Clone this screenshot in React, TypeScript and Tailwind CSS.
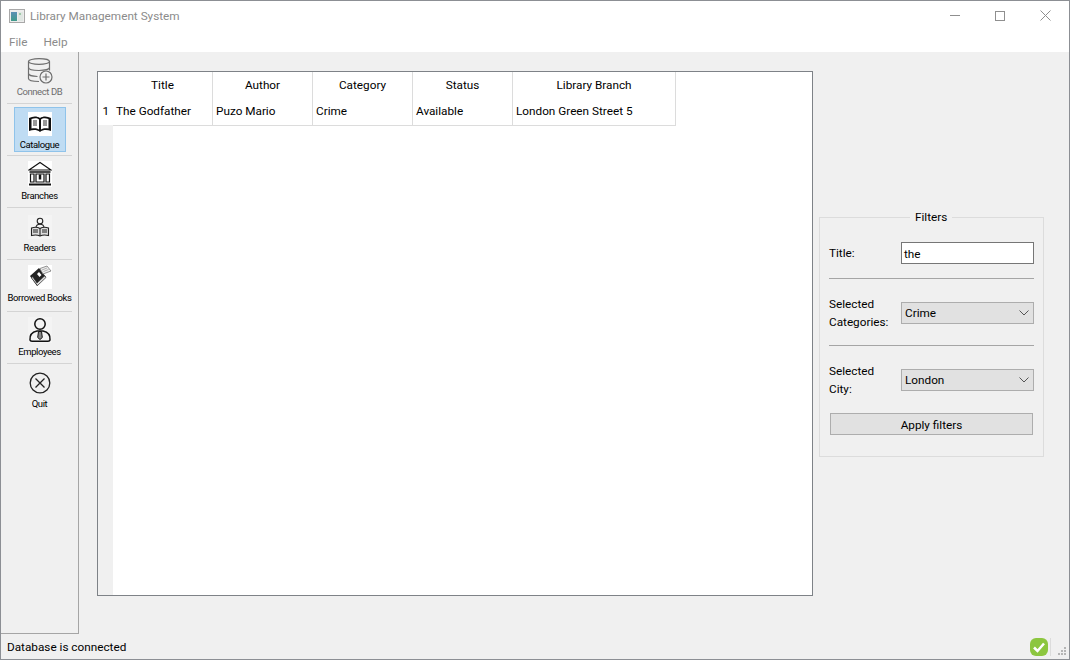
import React from "react";

const font = { fontFamily: 'Roboto, "Noto Sans", sans-serif' };

function DbIcon() {
  return (
    <svg width="26" height="26" viewBox="0 0 26 26" fill="none" stroke="#6e6e6e" strokeWidth="1.2">
      <ellipse cx="12" cy="3.5" rx="10.5" ry="2.8" />
      <path d="M1.5 3.5v17c0 1.8 4.5 3 10.500 3" />
      <path d="M22.5 3.5v9" />
      <path d="M1.500 9.500c0 1.800 4.700 3 10.500 3s10.500-1.200 10.500-3" />
      <path d="M1.500 15.500c0 1.800 4.500 3 9 3" />
      <circle cx="19" cy="19" r="6" fill="#f0f0f0" />
      <path d="M19 15.500v7M15.500 19h7" />
    </svg>
  );
}

function BookIcon() {
  return (
    <svg width="24" height="24" viewBox="0 0 24 24" className="bg-white">
      <path d="M1 19V6c4-2 8-2 11 0 3-2 7-2 11 0v13c-4-1.500-8-1.500-11 1-3-2.500-7-2.500-11-1z" fill="#111" />
      <path d="M3.500 16.500V7c3-1 6-1 7.500 .5v10c-2-1.500-5-1.500-7.500-1zM20.500 16.500V7c-3-1-6-1-7.500 .5v10c2-1.500 5-1.500 7.500-1z" fill="#fff" />
      <path d="M5 9h4M5 11h4M5 13h4M15 9h4M15 11h4M15 13h4" stroke="#333" strokeWidth="1" />
    </svg>
  );
}

function BankIcon() {
  return (
    <svg width="24" height="26" viewBox="0 0 24 26" fill="none" stroke="#111" strokeWidth="1.200" className="bg-white">
      <path d="M1 9 12 1.500 23 9z" />
      <path d="M1.500 11h21" strokeWidth="1.500" />
      <path d="M2.500 13h3.500v8H2.500zM18 13h3.500v8H18z" />
      <path d="M8 13h8v8H8z" />
      <path d="M12 13.500v5" strokeWidth="2.500" />
      <path d="M1 23.500h22" strokeWidth="2" />
    </svg>
  );
}

function ReaderIcon() {
  return (
    <svg width="24" height="24" viewBox="0 0 24 24" fill="none" stroke="#222" strokeWidth="1.100" className="bg-[#f4f4f4]">
      <circle cx="12" cy="6" r="2.800" />
      <path d="M8 13c0-2.500 2-3.800 4-3.800s4 1.300 4 3.800" />
      <path d="M3.500 13c3-1 6-1 8.500 .5 2.500-1.500 5.500-1.500 8.500-.5v7.500c-3-.800-6-.800-8.500 .5-2.500-1.300-5.500-1.300-8.500-.5z" fill="#ddd" />
      <path d="M5 15h5M5 17h5M14 15h5M14 17h5M12 13.500V21" />
    </svg>
  );
}

function BorrowedIcon() {
  return (
    <svg width="24" height="24" viewBox="0 0 24 24" className="bg-white">
      <path d="M2 11 11 3l7 9-9 9z" fill="#222" />
      <path d="M3.500 13 9.500 20.500 18 12.500 16.500 11 9 18 4.500 11.500z" fill="#ddd" stroke="#222" strokeWidth=".6" />
      <path d="M9 9l2-2 2.500 3-2 2z" fill="#fff" />
      <path d="M12 3.500 19 1l4 5-8 3z" fill="#eee" stroke="#777" strokeWidth=".8" />
      <path d="M14 5l5-2M15.500 6.500l5-2" stroke="#999" strokeWidth=".7" />
    </svg>
  );
}

function EmployeeIcon() {
  return (
    <svg width="24" height="26" viewBox="0 0 24 26" fill="none" stroke="#111" strokeWidth="1.500" className="bg-[#f4f4f4]">
      <circle cx="12" cy="7" r="5.200" />
      <path d="M2 23c-.5-5 2.500-8 7-9h6c4.500 1 7.500 4 7 9-.2 1-1 1.200-2 1.200H4c-1 0-1.800-.2-2-1.200z" />
      <path d="M10.500 14.500h3l.8 6-2.300 2-2.300-2z" fill="#888" strokeWidth="1" />
    </svg>
  );
}

function QuitIcon() {
  return (
    <svg width="24" height="24" viewBox="0 0 24 24" fill="none" stroke="#222" strokeWidth="1.300">
      <circle cx="12" cy="12" r="9.800" />
      <path d="M7.500 7.500l9 9M16.500 7.500l-9 9" />
    </svg>
  );
}

function WindowIcon() {
  return (
    <svg width="16" height="14" viewBox="0 0 16 14">
      <defs>
        <linearGradient id="wi" x1="0" y1="0" x2="0" y2="1">
          <stop offset="0" stopColor="#5b8fb5" />
          <stop offset="1" stopColor="#3f9a8a" />
        </linearGradient>
      </defs>
      <rect x=".5" y=".5" width="15" height="13" fill="#ececec" stroke="#a8a8a8" />
      <rect x="2" y="3" width="6" height="9" fill="url(#wi)" />
      <rect x="9" y="3" width="5" height="9" fill="#dfe6e2" />
      <rect x="10" y="4" width="2" height="2" fill="#9fc9a8" />
    </svg>
  );
}

function ChevronDown() {
  return (
    <svg width="10" height="6" viewBox="0 0 10 6" fill="none" stroke="#555" strokeWidth="1">
      <path d="M.5 .5 5 5 9.500 .5" />
    </svg>
  );
}

function SideItem({ label, icon, dim, active, top }: any) {
  return (
    <div className="flex h-[52px] justify-center border-b border-[#d4d4d4] mx-[6px] last:border-b-0">
      <div
        className={
          active
            ? "w-[52px] h-[45px] mt-[3px] flex flex-col items-center pt-[4px] bg-[#bfdcf3] border border-[#8fc3ea]"
            : "w-[68px] flex flex-col items-center " + top
        }
      >
        {icon}
        <span
          className={
            "text-[9.5px] tracking-[-0.4px] leading-[12px] whitespace-nowrap " +
            (dim ? "text-[#6d6d6d] mt-[2px]" : "text-black mt-[3px]")
          }
        >
          {label}
        </span>
      </div>
    </div>
  );
}

function Combo({ value }: any) {
  return (
    <div className="w-[133px] h-[22px] bg-[#e1e1e1] border border-[#adadad] flex items-center justify-between pl-[3px] pr-[4px]">
      <span className="pt-[2px]">{value}</span>
      <ChevronDown />
    </div>
  );
}

const columns = [
  { title: "Title", cell: "The Godfather", width: "w-[100px]" },
  { title: "Author", cell: "Puzo Mario", width: "w-[100px]" },
  { title: "Category", cell: "Crime", width: "w-[100px]" },
  { title: "Status", cell: "Available", width: "w-[100px]" },
  { title: "Library Branch", cell: "London Green Street 5", width: "w-[163px]" },
];

export default function App() {
  return (
    <div
      style={font}
      className="w-[1070px] h-[660px] flex flex-col bg-[#f0f0f0] border border-[#8c8f94] text-[11.75px] text-black overflow-hidden"
    >
      {/* title bar */}
      <div className="h-[29px] bg-white flex items-center shrink-0">
        <div className="ml-[8px] mr-[5px] flex">
          <WindowIcon />
        </div>
        <span className="text-[#8b8b8b] mt-[2px]">Library Management System</span>
        <div className="ml-auto flex items-center">
          <div className="w-[10px] h-px bg-[#8f8f8f] mr-[35px]" />
          <div className="w-[10px] h-[10px] border border-[#8f8f8f] mr-[35px]" />
          <svg width="11" height="11" viewBox="0 0 11 11" stroke="#8f8f8f" className="mr-[18px]">
            <path d="M.5 .5l10 10M10.500 .5l-10 10" />
          </svg>
        </div>
      </div>
      {/* menu */}
      <div className="h-[22px] bg-white flex items-center gap-[16px] px-[8px] pt-[3px] text-[#8b8b8b] shrink-0">
        <span>File</span>
        <span>Help</span>
      </div>

      <div className="flex-1 flex min-h-0">
        <div className="w-[78px] border-r border-b border-[#a5a5a5] shrink-0">
          <SideItem label="Connect DB" icon={<DbIcon />} dim top="pt-[6px]" />
          <SideItem label="Catalogue" icon={<BookIcon />} active />
          <SideItem label="Branches" icon={<BankIcon />} top="pt-[5px]" />
          <SideItem label="Readers" icon={<ReaderIcon />} top="pt-[7px]" />
          <SideItem label="Borrowed Books" icon={<BorrowedIcon />} top="pt-[5px]" />
          <SideItem label="Employees" icon={<EmployeeIcon />} top="pt-[5px]" />
          <SideItem label="Quit" icon={<QuitIcon />} top="pt-[7px]" />
        </div>

        <div className="flex-1 flex pl-[18px] pt-[19px]">
          {/* table */}
          <div className="w-[716px] h-[525px] border border-[#7e8287] bg-white flex shrink-0">
            <div className="w-[15px] bg-[#f0f0f0] flex flex-col">
              <div className="h-[26px] bg-white" />
              <div className="h-[27px] bg-white text-right pr-[4px] leading-[27px]">1</div>
            </div>
            <div className="flex items-start">
              {columns.map((c) => (
                <div key={c.title} className={c.width + " border-r border-b border-[#dcdcdc] shrink-0"}>
                  <div className="h-[26px] text-center leading-[26px]">{c.title}</div>
                  <div className="h-[27px] pl-[3px] leading-[27px] whitespace-nowrap">{c.cell}</div>
                </div>
              ))}
            </div>
          </div>

          {/* filters */}
          <div className="relative w-[225px] h-[240px] ml-[6px] mt-[146px] border border-[#dcdcdc] pl-[9px] pr-[9px] shrink-0">
            <span className="absolute left-[90px] top-[-9px] bg-[#f0f0f0] px-[5px] leading-[16px]">Filters</span>
            <div className="flex items-center justify-between mt-[24px] h-[22px]">
              <span className="pt-[2px]">Title:</span>
              <div className="w-[133px] h-[22px] bg-white border border-[#767676] pl-[2px] leading-[22px]">the</div>
            </div>
            <div className="h-px bg-[#a5a5a5] mt-[14px]" />
            <div className="flex items-center justify-between mt-[16px]">
              <span className="h-[36px] leading-[18px]">Selected<br />Categories:</span>
              <Combo value="Crime" />
            </div>
            <div className="h-px bg-[#a5a5a5] mt-[14px]" />
            <div className="flex items-center justify-between mt-[16px]">
              <span className="h-[36px] leading-[18px]">Selected<br />City:</span>
              <Combo value="London" />
            </div>
            <div className="w-[203px] h-[22px] mt-[15px] ml-px bg-[#e1e1e1] border border-[#adadad] text-center leading-[22px]">
              Apply filters
            </div>
          </div>
        </div>
      </div>

      {/* status bar */}
      <div className="h-[25px] flex items-center pl-[6px] shrink-0">
        <span className="pt-[2px]">Database is connected</span>
        <div className="ml-auto flex items-center">
          <svg width="18" height="18" viewBox="0 0 18 18" className="mr-[2px]">
            <rect width="18" height="18" rx="6" fill="#8cc63f" />
            <path d="M4 9.500 7.500 13 14 5.500" fill="none" stroke="#fff" strokeWidth="2.500" />
          </svg>
          <div className="w-px h-[18px] bg-[#dcdcdc] mr-[7px]" />
          <svg width="8" height="8" viewBox="0 0 8 8" fill="#b5b5b5" className="self-end mr-[3px] mb-px">
            <rect x="6" y="0" width="2" height="2" />
            <rect x="3" y="3" width="2" height="2" />
            <rect x="6" y="3" width="2" height="2" />
            <rect x="0" y="6" width="2" height="2" />
            <rect x="3" y="6" width="2" height="2" />
            <rect x="6" y="6" width="2" height="2" />
          </svg>
        </div>
      </div>
    </div>
  );
}
